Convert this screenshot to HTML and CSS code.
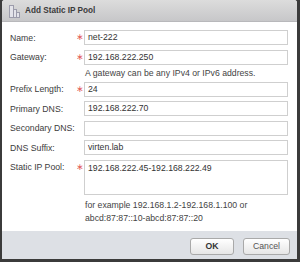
FILE: index.html
```html
<!DOCTYPE html>
<html>
<head>
<meta charset="utf-8">
<link rel="stylesheet" href="styles.css">
</head>
<body>
<div class="dialog">
  <div class="titlebar">
    <svg class="ticon" width="12" height="13" viewBox="0 0 12 13">
      <rect x="0.5" y="0.5" width="4" height="12" fill="#e4e4ea" stroke="#9c9cab"/>
      <rect x="4.5" y="4.5" width="3" height="8" fill="#e4e4ea" stroke="#9c9cab"/>
      <rect x="7.5" y="7.5" width="3" height="5" fill="#e4e4ea" stroke="#9c9cab"/>
    </svg>
    <span class="title">Add Static IP Pool</span>
  </div>
  <div class="body">
    <div class="row"><span class="lbl">Name:</span><span class="req">∗</span><div class="field">net-222</div></div>
    <div class="row"><span class="lbl">Gateway:</span><span class="req">∗</span><div class="field">192.168.222.250</div></div>
    <div class="hint">A gateway can be any IPv4 or IPv6 address.</div>
    <div class="row"><span class="lbl">Prefix Length:</span><span class="req">∗</span><div class="field">24</div></div>
    <div class="row"><span class="lbl">Primary DNS:</span><span class="req"></span><div class="field">192.168.222.70</div></div>
    <div class="row"><span class="lbl">Secondary DNS:</span><span class="req"></span><div class="field"></div></div>
    <div class="row"><span class="lbl">DNS Suffix:</span><span class="req"></span><div class="field">virten.lab</div></div>
    <div class="row area"><span class="lbl">Static IP Pool:</span><span class="req">∗</span><div class="field textarea">192.168.222.45-192.168.222.49</div></div>
    <div class="hint example">for example 192.168.1.2-192.168.1.100 or<br>abcd:87:87::10-abcd:87:87::20</div>
  </div>
  <div class="footer">
    <button class="btn primary">OK</button>
    <button class="btn">Cancel</button>
  </div>
</div>
</body>
</html>
```
FILE: styles.css
```css
html, body {
  margin: 0;
  padding: 0;
  width: 300px;
  height: 262px;
  overflow: hidden;
  background: #3b3b3b;
  font-family: "Liberation Sans", Arial, sans-serif;
  font-size: 8.7px;
  color: #333;
}
.dialog {
  margin-left: 2px;
  width: 295px;
  height: 259px;
  background: #fff;
  display: flex;
  flex-direction: column;
  border-radius: 3px 3px 0 0;
  overflow: hidden;
}
.titlebar {
  height: 22px;
  flex: none;
  background: linear-gradient(#dcdcdc, #c7c7c9);
  border-bottom: 1px solid #b8b8bb;
  box-sizing: border-box;
  display: flex;
  align-items: center;
  padding-left: 7px;
}
.ticon {
  margin-right: 4px;
  margin-top: 1px;
}
.title {
  font-weight: bold;
  font-size: 8.2px;
  color: #3a3a3a;
}
.body {
  flex: 1;
  display: flex;
  flex-direction: column;
  gap: 4.5px;
  padding: 8px 9px 0 8px;
}
.row {
  display: grid;
  grid-template-columns: 66px 8px 1fr;
  align-items: center;
  height: 15px;
}
.row.area {
  height: 35px;
  align-items: start;
}
.lbl {
  color: #3c3c3c;
}
.row.area .lbl {
  padding-top: 2px;
}
.req {
  color: #e25a5a;
  font-family: "DejaVu Sans", sans-serif;
  font-size: 9px;
  text-align: center;
  line-height: 15px;
}
.field {
  height: 15px;
  box-sizing: border-box;
  border: 1px solid #cfcfcf;
  padding: 0 3px;
  line-height: 13px;
  color: #333;
  background: #fff;
}
.field.textarea {
  height: 35px;
  padding-top: 1px;
}
.hint {
  margin-left: 75px;
  line-height: 8px;
  height: 8px;
  color: #444;
}
.hint.example {
  line-height: 13px;
  height: 26px;
  margin-left: 75px;
}
.footer {
  flex: none;
  height: 28px;
  background: #dde0e5;
  display: flex;
  justify-content: flex-end;
  align-items: center;
  gap: 9px;
  padding-right: 7px;
}
.btn {
  height: 17px;
  box-sizing: border-box;
  border: 1px solid #a9a9a9;
  border-radius: 3px;
  background: linear-gradient(#ffffff, #e6e6e6);
  font-family: "Liberation Sans", Arial, sans-serif;
  font-size: 8.7px;
  color: #333;
  padding: 0;
  margin: 0;
  margin-top: 2px;
}
.btn.primary {
  width: 44px;
  font-weight: bold;
}
.btn:not(.primary) {
  width: 47px;
  color: #555;
}
```
